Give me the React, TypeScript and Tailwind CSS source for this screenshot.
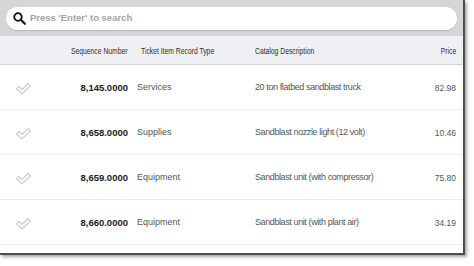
import React from "react";

const rows = [
  { seq: "8,145.0000", type: "Services", desc: "20 ton flatbed sandblast truck", price: "82.98" },
  { seq: "8,658.0000", type: "Supplies", desc: "Sandblast nozzle light (12 volt)", price: "10.46" },
  { seq: "8,659.0000", type: "Equipment", desc: "Sandblast unit (with compressor)", price: "75.80" },
  { seq: "8,660.0000", type: "Equipment", desc: "Sandblast unit (with plant air)", price: "34.19" },
];

function CheckMark() {
  return (
    <svg width="17" height="13" viewBox="0 0 17 13" fill="none">
      <path
        d="M1.5 7 L4 4.5 L7 7.5 L13 1.5 L15.5 4 L7 12 Z"
        stroke="#cfcfcf"
        strokeWidth="1.1"
        strokeLinejoin="round"
        fill="#fafafa"
      />
    </svg>
  );
}

function SearchIcon() {
  return (
    <svg width="13" height="13" viewBox="0 0 13 13" fill="none">
      <circle cx="5" cy="5" r="3.8" stroke="#111" strokeWidth="1.8" />
      <path d="M7.8 7.8 L11.8 11.8" stroke="#111" strokeWidth="2.2" strokeLinecap="round" />
    </svg>
  );
}

export default function App() {
  return (
    <div className="w-[474px] h-[266px] bg-white font-['Liberation_Sans',Arial,sans-serif]">
      <div className="w-[465px] h-[255px] flex flex-col border-r-2 border-b-2 border-[#4d4d4d] shadow-[2px_2px_3px_rgba(0,0,0,0.35)] bg-white">
        {/* search bar */}
        <div className="h-[36px] bg-[#d6d6d6] pl-[6px] pr-[6px] pt-[7px] pb-[6px]">
          <div className="h-[23px] rounded-full bg-white flex items-center pl-[7px] gap-[4px] shadow-[0_1px_1px_rgba(0,0,0,0.15)]">
            <SearchIcon />
            <span className="text-[9.5px] font-bold text-[#a3a3a3]">Press 'Enter' to search</span>
          </div>
        </div>

        {/* header */}
        <div className="h-[29px] bg-[#eef0f4] border-b border-[#d2d2d2] flex items-center pt-[4px] text-[9.3px] leading-none text-[#2e2e2e]">
          <div className="w-[60px]" />
          <div className="w-[68px] flex justify-end whitespace-nowrap">
            <span className="inline-block origin-right scale-x-[0.73]">Sequence Number</span>
          </div>
          <div className="w-[127px] pl-[13px] whitespace-nowrap">
            <span className="inline-block origin-left scale-x-[0.73]">Ticket Item Record Type</span>
          </div>
          <div className="flex-1 whitespace-nowrap">
            <span className="inline-block origin-left scale-x-[0.73]">Catalog Description</span>
          </div>
          <div className="pr-[7px] flex justify-end whitespace-nowrap">
            <span className="inline-block origin-right scale-x-[0.73]">Price</span>
          </div>
        </div>

        {/* rows */}
        {rows.map((r) => (
          <div key={r.seq} className="h-[45px] border-b border-[#ebebeb] flex items-center pt-[2px]">
            <div className="w-[60px] pl-[15px] flex items-center">
              <CheckMark />
            </div>
            <div className="w-[68px] text-right text-[9.5px] font-bold text-[#1a1a1a]">{r.seq}</div>
            <div className="w-[127px] pl-[9px] text-[9px] text-[#555]">{r.type}</div>
            <div className="flex-1 text-[9px] tracking-[-0.4px] text-[#555] whitespace-nowrap">{r.desc}</div>
            <div className="pr-[7px] text-right text-[8.5px] text-[#555]">{r.price}</div>
          </div>
        ))}
      </div>
    </div>
  );
}
